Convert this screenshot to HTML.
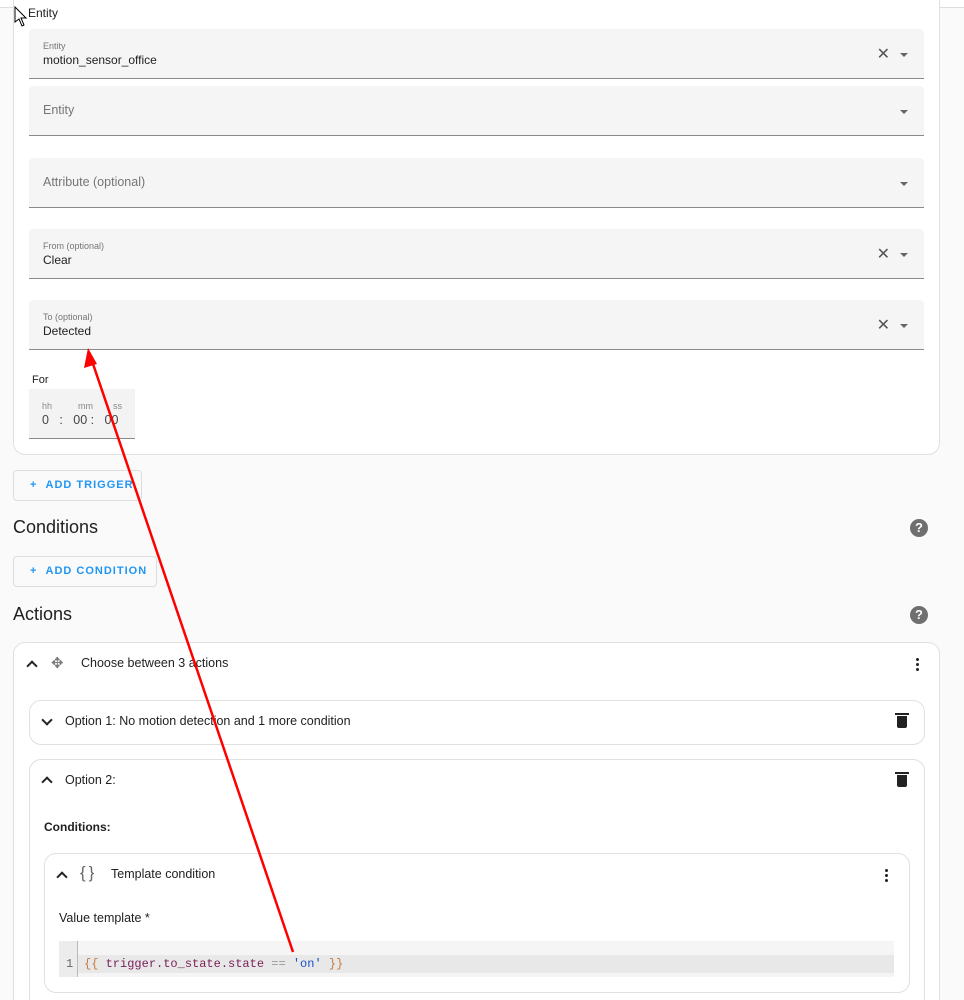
<!DOCTYPE html><html style="overflow:hidden;height:1000px"><head><style>
body{margin:0;width:964px;height:1000px;overflow:hidden;background:#fafafa;font-family:"Liberation Sans",sans-serif;color:#212121;position:relative}
.a{position:absolute}
.card{position:absolute;background:#fff;border:1px solid #e0e0e0;border-radius:12px;box-sizing:border-box}
.f{position:absolute;left:29px;width:895px;height:50px;background:#f5f5f5;border-bottom:1px solid #8a8a8a;border-radius:4px 4px 0 0;box-sizing:border-box}
.f .lab{position:absolute;left:14px;top:12px;font-size:9px;color:#757575}
.f .val{position:absolute;left:14px;top:24px;font-size:12px;color:#212121}
.f .ph{position:absolute;left:14px;top:17px;font-size:12.5px;color:#757575}
.x{position:absolute;right:34px;top:15px;font-size:16px;color:#555}
.tri{position:absolute;right:16px;top:24px;width:0;height:0;border-left:4px solid transparent;border-right:4px solid transparent;border-top:4px solid #666}
.btn{position:absolute;border:1px solid #ddd;border-radius:4px;background:#fafafa;color:#2196f3;font-size:11px;font-weight:bold;letter-spacing:1px;box-sizing:border-box;line-height:29px;padding-left:16px}
.h{position:absolute;left:13px;font-size:18px;color:#212121}
.help{position:absolute;left:910px;width:18px;height:18px;border-radius:50%;background:#6f6f6f;color:#fff;font-size:13px;font-weight:bold;text-align:center;line-height:18px}
.t{position:absolute;font-size:12.5px;color:#212121}
.chev{position:absolute;width:6px;height:6px;border-left:2px solid #222;border-top:2px solid #222}
.trash{position:absolute;width:10px;height:12px;background:#222;border-radius:0 0 2px 2px}
.trash:before{content:"";position:absolute;left:-2px;top:-3px;width:14px;height:2px;background:#222}
.dots{position:absolute;width:3px;height:3px;background:#222;border-radius:50%;box-shadow:0 5px #222,0 10px #222}
</style></head><body>
<div class="a" style="left:0;top:0;width:964px;height:7px;background:#fff;border-bottom:1px solid #ddd"></div>
<div class="card" style="left:13px;top:-20px;width:927px;height:475px"></div>
<div class="t" style="left:28px;top:6px;font-size:12px">Entity</div>
<div class="f" style="top:29px"><div class="lab">Entity</div><div class="val">motion_sensor_office</div><div class="x">✕</div><div class="tri"></div></div>
<div class="f" style="top:86px"><div class="ph">Entity</div><div class="tri"></div></div>
<div class="f" style="top:158px"><div class="ph">Attribute (optional)</div><div class="tri"></div></div>
<div class="f" style="top:229px"><div class="lab">From (optional)</div><div class="val">Clear</div><div class="x">✕</div><div class="tri"></div></div>
<div class="f" style="top:300px"><div class="lab">To (optional)</div><div class="val">Detected</div><div class="x">✕</div><div class="tri"></div></div>
<div class="t" style="left:32px;top:374px;font-size:11px">For</div>
<div class="a" style="left:29px;top:389px;width:106px;height:49px;background:#f3f3f3;border-bottom:1px solid #8a8a8a"></div>
<div class="a" style="left:42px;top:401px;font-size:9px;color:#888">hh</div>
<div class="a" style="left:78px;top:401px;font-size:9px;color:#888">mm</div>
<div class="a" style="left:113px;top:401px;font-size:9px;color:#888">ss</div>
<div class="a" style="left:42px;top:413px;font-size:12.5px;color:#444;white-space:pre">0   :   00 :   00</div>
<div class="btn" style="left:13px;top:470px;width:129px;height:31px">+ &nbsp;ADD TRIGGER</div>
<div class="h" style="top:517px">Conditions</div><div class="help" style="top:519px">?</div>
<div class="btn" style="left:13px;top:556px;width:144px;height:31px">+ &nbsp;ADD CONDITION</div>
<div class="h" style="top:604px">Actions</div><div class="help" style="top:606px">?</div>
<div class="card" style="left:13px;top:642px;width:927px;height:370px"></div>
<div class="chev" style="left:28px;top:662px;transform:rotate(45deg)"></div>
<div class="a" style="left:51px;top:654px;font-size:15px;color:#777">✥</div>
<div class="t" style="left:81px;top:656px">Choose between 3 actions</div>
<div class="dots" style="left:916px;top:658px"></div>
<div class="card" style="left:29px;top:700px;width:896px;height:45px"></div>
<div class="chev" style="left:43px;top:716px;transform:rotate(225deg)"></div>
<div class="t" style="left:65px;top:714px">Option 1: No motion detection and 1 more condition</div>
<div class="trash" style="left:897px;top:716px"></div>
<div class="card" style="left:29px;top:759px;width:896px;height:260px"></div>
<div class="chev" style="left:43px;top:778px;transform:rotate(45deg)"></div>
<div class="t" style="left:65px;top:773px">Option 2:</div>
<div class="trash" style="left:897px;top:775px"></div>
<div class="t" style="left:44px;top:820px;font-weight:bold;font-size:12px">Conditions:</div>
<div class="card" style="left:44px;top:853px;width:866px;height:140px"></div>
<div class="chev" style="left:58px;top:873px;transform:rotate(45deg)"></div>
<div class="a" style="left:80px;top:863px;font-size:17px;color:#666;letter-spacing:3px">{}</div>
<div class="t" style="left:111px;top:867px">Template condition</div>
<div class="dots" style="left:885px;top:869px"></div>
<div class="t" style="left:59px;top:911px">Value template *</div>
<div class="a" style="left:59px;top:941px;width:835px;height:36px;background:#f5f5f5"></div>
<div class="a" style="left:59px;top:941px;width:18px;height:36px;background:#ececec;border-right:1px solid #bbb"></div>
<div class="a" style="left:78px;top:955px;width:816px;height:18px;background:#e8e8e8"></div>
<div class="a" style="left:66px;top:957px;font-family:'Liberation Mono',monospace;font-size:12px;color:#666">1</div>
<div class="a" style="left:84px;top:957px;font-family:'Liberation Mono',monospace;font-size:12px;white-space:pre"><span style="color:#c87a3c">{{</span> <span style="color:#7a1e5a">trigger.to_state.state</span> <span style="color:#999">==</span> <span style="color:#1a4fc4">'on'</span> <span style="color:#c87a3c">}}</span></div>
<svg class="a" style="left:0;top:0" width="964" height="1000"><line x1="293" y1="952" x2="91" y2="358" stroke="#f00" stroke-width="2.5"/><polygon points="88,348 84,368 97,364" fill="#f00"/>
<path d="M15 7 L15 22 L19 19 L22 26 L24 25 L21 18 L26 18 Z" fill="#fff" stroke="#000" stroke-width="1"/></svg>
</body></html>
